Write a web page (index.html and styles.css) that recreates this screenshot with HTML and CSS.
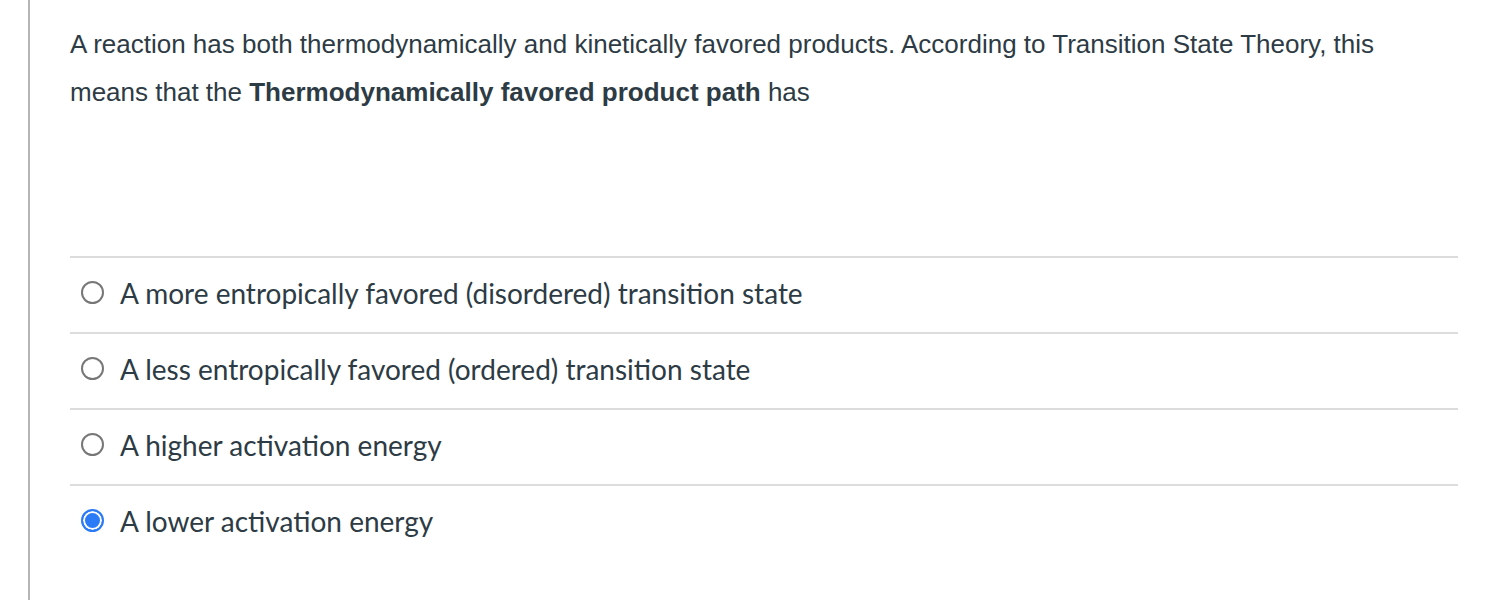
FILE: index.html
```html
<!DOCTYPE html>
<html>
<head>
<meta charset="utf-8">
<link rel="stylesheet" href="styles.css">
</head>
<body>
<div class="page">
  <div class="question">
    <p class="qtext">A reaction has both thermodynamically and kinetically favored products. According to Transition State Theory, this means that the <strong>Thermodynamically favored product path</strong> has</p>
    <div class="answers">
      <label class="answer"><span class="radio"></span><span class="atext">A more entropically favored (disordered) transition state</span></label>
      <label class="answer"><span class="radio"></span><span class="atext">A less entropically favored (ordered) transition state</span></label>
      <label class="answer"><span class="radio"></span><span class="atext">A higher activation energy</span></label>
      <label class="answer"><span class="radio checked"></span><span class="atext">A lower activation energy</span></label>
    </div>
  </div>
</div>
</body>
</html>
```

FILE: styles.css
```css
html, body {
  margin: 0;
  padding: 0;
  background: #fff;
}
.page {
  margin-left: 28px;
  border-left: 2px solid #b5b5b5;
  min-height: 600px;
  padding: 20px 34px 0 40px;
  color: #2d3b45;
}
.qtext {
  margin: 0;
  font-family: "Liberation Sans", Arial, sans-serif;
  font-size: 26px;
  line-height: 48px;
  width: 1340px;
}
.qtext strong {
  font-weight: bold;
}
.answers {
  margin-top: 140px;
}
.answer {
  box-sizing: border-box;
  display: flex;
  align-items: center;
  height: 76px;
  padding-bottom: 5px;
  border-top: 2px solid #dcdcdc;
  padding-left: 11px;
  font-family: Lato, sans-serif;
  font-size: 28px;
}
.radio {
  box-sizing: border-box;
  width: 23px;
  height: 23px;
  border: 2px solid #777;
  border-radius: 50%;
  margin-right: 16px;
  flex: none;
}
.radio.checked {
  border-color: #2b7af6;
  background: #2b7af6;
  box-shadow: inset 0 0 0 2px #fff;
}
```
